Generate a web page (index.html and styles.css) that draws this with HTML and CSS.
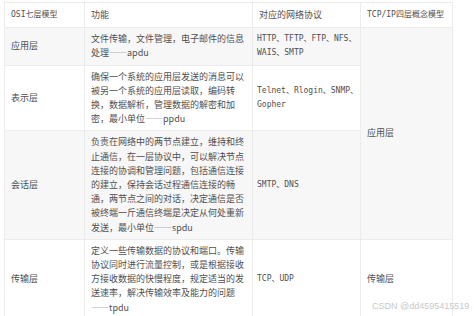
FILE: index.html
```html
<!DOCTYPE html>
<html lang="zh-CN">
<head>
<meta charset="utf-8">
<title>OSI七层模型</title>
<link rel="stylesheet" href="styles.css">
</head>
<body>
<table class="osi">
  <colgroup>
    <col class="c1"><col class="c2"><col class="c3"><col class="c4">
  </colgroup>
  <thead>
    <tr class="head">
      <th class="mono">OSI七层模型</th>
      <th>功能</th>
      <th>对应的网络协议</th>
      <th class="mono">TCP/IP四层概念模型</th>
    </tr>
  </thead>
  <tbody>
    <tr class="alt">
      <td>应用层</td>
      <td>文件传输，文件管理，电子邮件的信息处理——apdu</td>
      <td class="mono">HTTP、TFTP、FTP、NFS、WAIS、SMTP</td>
      <td rowspan="3">应用层</td>
    </tr>
    <tr>
      <td>表示层</td>
      <td>确保一个系统的应用层发送的消息可以被另一个系统的应用层读取，编码转换，数据解析，管理数据的解密和加密，最小单位——ppdu</td>
      <td class="mono">Telnet、Rlogin、SNMP、Gopher</td>
    </tr>
    <tr class="alt">
      <td>会话层</td>
      <td>负责在网络中的两节点建立，维持和终止通信，在一层协议中，可以解决节点连接的协调和管理问题，包括通信连接的建立，保持会话过程通信连接的畅通，两节点之间的对话，决定通信是否被终端一斤通信终端是决定从何处重新发送，最小单位——spdu</td>
      <td class="mono">SMTP、DNS</td>
    </tr>
    <tr>
      <td>传输层</td>
      <td>定义一些传输数据的协议和端口。传输协议同时进行流量控制，或是根据接收方接收数据的快慢程度，规定适当的发送速率，解决传输效率及能力的问题——tpdu</td>
      <td class="mono">TCP、UDP</td>
      <td>传输层</td>
    </tr>
  </tbody>
</table>
<div class="watermark">CSDN @dd4595415519</div>
</body>
</html>
```

FILE: styles.css
```css
html, body {
  margin: 0;
  padding: 0;
  background: #ffffff;
  overflow: hidden;
  height: 316px;
}
body {
  position: relative;
  font-family: "Noto Sans CJK SC", "Noto Sans", sans-serif;
  color: #4f4f4f;
}
.osi {
  border-collapse: collapse;
  table-layout: fixed;
  width: 448px;
  margin: 2px 0 0 4px;
  font-size: 9px;
  line-height: 14.2px;
}
.c1 { width: 80px; }
.c2 { width: 168px; }
.c3 { width: 108px; }
.c4 { width: 92px; }
.osi th, .osi td {
  border: 1px solid #ececec;
  padding: 4px 6px;
  text-align: left;
  vertical-align: middle;
  font-weight: normal;
}
.osi th {
  padding-top: 5px;
  padding-bottom: 5px;
  white-space: nowrap;
}
.osi .alt td {
  background: #f7f7f7;
}
.mono {
  font-family: "DejaVu Sans Mono", "Noto Sans CJK SC", monospace;
  font-size: 8px;
}
.osi td.mono {
  padding-left: 4px;
  padding-right: 0;
}
.watermark {
  position: absolute;
  left: 372px;
  top: 300px;
  font-family: "Liberation Sans", Arial, sans-serif;
  font-size: 9px;
  line-height: 12px;
  color: #c8c8c8;
  white-space: nowrap;
}
```
